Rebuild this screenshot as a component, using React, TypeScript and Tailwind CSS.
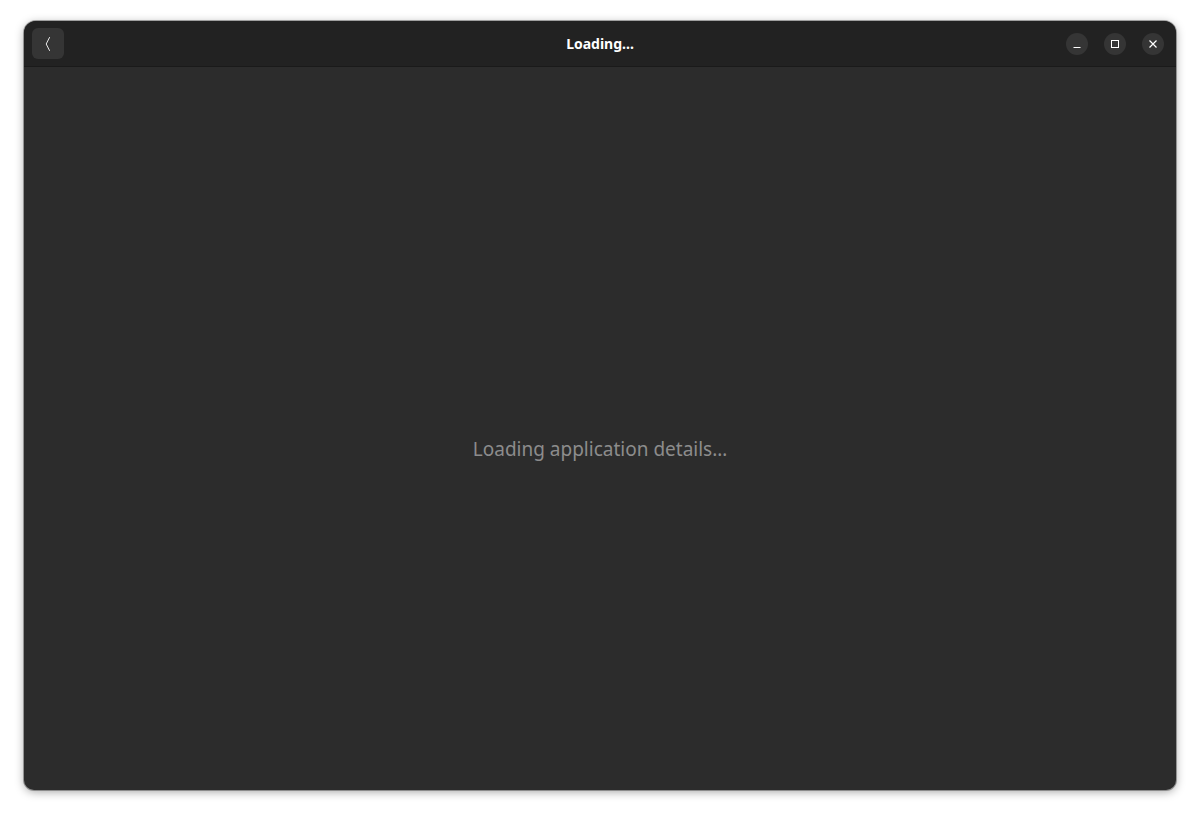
export default function App() {
  return (
    <div className="w-[1200px] h-[816px] bg-white pt-[21px] pl-[24px] font-['Noto_Sans',sans-serif]">
      <div className="w-[1152px] h-[769px] rounded-t-[12px] rounded-b-[10px] bg-[#2c2c2c] flex flex-col overflow-hidden shadow-[0_2px_10px_rgba(0,0,0,0.35)] ring-1 ring-black/30">
        <div className="h-[46px] bg-[#222222] border-b border-[#1a1a1a] flex items-center px-[8px] relative">
          <button className="w-[32px] h-[31px] rounded-[6px] bg-[#353535] flex items-center justify-center">
            <svg width="16" height="18" viewBox="0 0 16 18" fill="none">
              <path d="M9.5 2.5 L6.2 9 L9.5 15.5" stroke="#e8e8e8" strokeWidth="1" strokeLinecap="round" strokeLinejoin="round" />
            </svg>
          </button>
          <div className="absolute inset-0 flex items-center justify-center pointer-events-none">
            <span className="text-[14px] font-bold text-white">Loading...</span>
          </div>
          <div className="ml-auto flex items-center gap-[16px] pr-[4px]">
            <span className="w-[22px] h-[22px] rounded-full bg-[#353535] flex items-center justify-center">
              <svg width="10" height="10" viewBox="0 0 10 10">
                <path d="M1.5 8.5 H8.5" stroke="#ffffff" strokeWidth="1" />
              </svg>
            </span>
            <span className="w-[22px] h-[22px] rounded-full bg-[#353535] flex items-center justify-center">
              <svg width="10" height="10" viewBox="0 0 10 10">
                <rect x="1.5" y="1.5" width="7" height="7" stroke="#ffffff" strokeWidth="1" fill="none" />
              </svg>
            </span>
            <span className="w-[22px] h-[22px] rounded-full bg-[#353535] flex items-center justify-center">
              <svg width="10" height="10" viewBox="0 0 10 10">
                <path d="M1.5 1.5 L8.5 8.5 M8.5 1.5 L1.5 8.5" stroke="#ffffff" strokeWidth="1.2" />
              </svg>
            </span>
          </div>
        </div>
        <div className="flex-1 flex items-center justify-center pt-[42px]">
          <span className="text-[19px] text-[#8c8c8c]">Loading application details…</span>
        </div>
      </div>
    </div>
  );
}
